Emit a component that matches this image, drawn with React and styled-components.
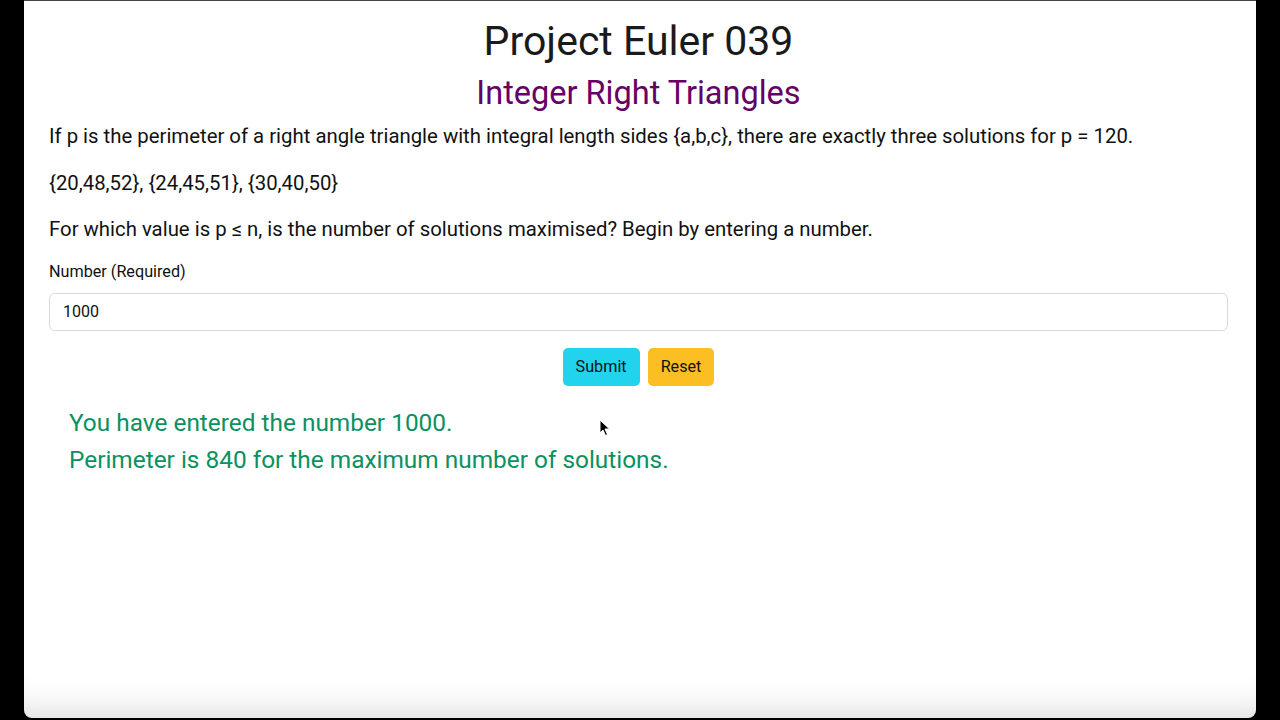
import React from "react";
import styled, { createGlobalStyle } from "styled-components";

const GlobalStyle = createGlobalStyle`
    html, body {
        margin: 0;
        padding: 0;
        background: #000;
        font-family: Roboto, "Liberation Sans", sans-serif;
    }
`;

const Frame = styled.div`
    position: relative;
    margin: 0 24px;
    height: 717px;
    background: #fff;
    border-top: 1px solid #444;
    border-radius: 0 0 8px 8px;
    box-shadow: inset 0 -34px 30px -24px rgba(0, 0, 0, 0.12);
    overflow: hidden;
`;

const Content = styled.main`
    padding: 16px 28px 0 25px;
    display: flex;
    flex-direction: column;
`;

const Title = styled.h1`
    margin: 0;
    font-size: 41px;
    line-height: 48px;
    font-weight: 400;
    color: #1a1a1a;
    text-align: center;
`;

const Subtitle = styled.h2`
    margin: 10px 0 0;
    font-size: 32.5px;
    line-height: 36px;
    font-weight: 400;
    color: #660066;
    text-align: center;
`;

const Para = styled.p`
    margin: ${p => (p.first ? "11px" : "18.7px")} 0 0;
    font-size: 20.35px;
    line-height: 28px;
    color: #111;
`;

const Label = styled.label`
    margin-top: 19px;
    font-size: 16.2px;
    line-height: 20px;
    color: #111;
`;

const Input = styled.input`
    margin-top: 10.5px;
    height: 38px;
    box-sizing: border-box;
    border: 1px solid #d9d9d9;
    border-radius: 6px;
    padding: 0 13px;
    font-family: inherit;
    font-size: 16px;
    color: #111;
    outline: none;
`;

const ButtonRow = styled.div`
    margin-top: 17px;
    display: flex;
    justify-content: center;
    gap: 8px;
`;

const Button = styled.button`
    height: 38px;
    padding: 0 13px;
    border: none;
    border-radius: 5px;
    font-family: inherit;
    font-size: 16.2px;
    color: #111;
    background: ${p => p.bg};
    cursor: pointer;
`;

const Results = styled.div`
    margin: 18.5px 0 0 20px;
    color: #0b9160;
    font-size: 24.4px;
    line-height: 37px;
`;

const Cursor = styled.svg`
    position: absolute;
    left: 575px;
    top: 418px;
    width: 12px;
    height: 18px;
`;

export default function App() {
    return (
        <>
            <GlobalStyle />
            <Frame>
                <Content>
                    <Title>Project Euler 039</Title>
                    <Subtitle>Integer Right Triangles</Subtitle>
                    <Para first>
                        If p is the perimeter of a right angle triangle with integral length sides {"{a,b,c}"}, there are exactly three solutions for p = 120.
                    </Para>
                    <Para>{"{20,48,52}, {24,45,51}, {30,40,50}"}</Para>
                    <Para>For which value is p ≤ n, is the number of solutions maximised? Begin by entering a number.</Para>
                    <Label htmlFor="num">Number (Required)</Label>
                    <Input id="num" defaultValue="1000" />
                    <ButtonRow>
                        <Button bg="#22d3ee">Submit</Button>
                        <Button bg="#fbbf24">Reset</Button>
                    </ButtonRow>
                    <Results>
                        <div>You have entered the number 1000.</div>
                        <div>Perimeter is 840 for the maximum number of solutions.</div>
                    </Results>
                </Content>
                <Cursor viewBox="0 0 12 18">
                    <path d="M1 1 L1 14 L4 11 L6.5 16.5 L8.5 15.5 L6 10 L10.5 10 Z" fill="#000" stroke="#fff" strokeWidth="1" />
                </Cursor>
            </Frame>
        </>
    );
}
